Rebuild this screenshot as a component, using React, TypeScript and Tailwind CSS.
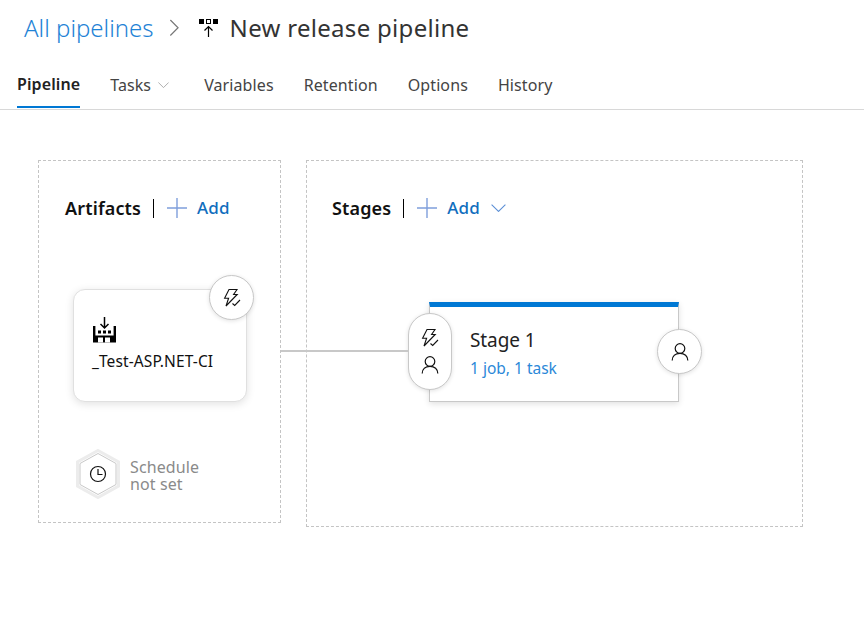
import React from "react";

const BoltCheck = () => (
	<svg width="20" height="20" viewBox="0 0 20 20" fill="none" stroke="#111" strokeWidth="1.1">
		<path d="M7 1.500h8l-3.400 5h3.600L4 18l2.600-7.800H2.600z" />
		<path d="M10.500 15.500l2.200 2 5.300-5.500" />
	</svg>
);

const Person = () => (
	<svg width="18" height="20" viewBox="0 0 18 20" fill="none" stroke="#111" strokeWidth="1.2">
		<circle cx="9" cy="6.5" r="4.8" />
		<path d="M1.2 18.5c0-4.5 3.2-7.2 7.8-7.2s7.8 2.700 7.800 7.200" />
	</svg>
);

const Plus = () => (
	<svg width="20" height="20" viewBox="0 0 20 20" stroke="#7f9fdc" strokeWidth="1.4">
		<path d="M10 0v20M0 10h20" />
	</svg>
);

const Chevron = ({ color, size }: { color: string; size: number }) => (
	<svg width={size} height={size / 2 + 1} viewBox="0 0 14 8" fill="none" stroke={color} strokeWidth="1">
		<path d="M.5.5L7 7l6.500-6.500" />
	</svg>
);

const PipelineIcon = () => (
	<svg width="20" height="20" viewBox="0 0 20 20">
		<rect x="0" y="1" width="5" height="5" fill="#000" />
		<rect x="7.500" y="1.500" width="4" height="4" fill="#fff" stroke="#000" />
		<rect x="14" y="1" width="5" height="5" fill="#000" />
		<path d="M9.500 19V9M5.500 12.500l4-4 4 4" fill="none" stroke="#000" strokeWidth="1.200" />
	</svg>
);

const ArtifactIcon = () => (
	<svg width="23" height="26" viewBox="0 0 23 26">
		<path d="M11.500 0v11M7.500 7l4 4 4-4" fill="none" stroke="#000" strokeWidth="1.500" />
		<path d="M1.200 9v10M21.800 9v10" stroke="#000" strokeWidth="2.400" />
		<rect x="5" y="13.500" width="3" height="3" fill="#000" />
		<rect x="10" y="13.500" width="3" height="3" fill="#000" />
		<rect x="15" y="13.500" width="3" height="3" fill="#000" />
		<rect x="0" y="18.500" width="23" height="7" fill="#000" />
		<rect x="5" y="20.500" width="5" height="5" fill="#fff" />
		<rect x="12" y="20.500" width="5" height="5" fill="#fff" />
	</svg>
);

const ScheduleIcon = () => (
	<svg width="44" height="50" viewBox="0 0 44 50" fill="none">
		<path d="M22 1.500L42.500 13v24L22 48.500 1.500 37V13z" stroke="#ececec" strokeWidth="3" fill="#fff" />
		<path d="M22 4.500L40 14.500v21L22 45.500 4 35.500v-21z" stroke="#c8c8c8" strokeWidth="1" fill="#fff" />
		<circle cx="22" cy="25" r="7.500" stroke="#111" strokeWidth="1.200" />
		<path d="M22 20v5.500h4.500" stroke="#111" strokeWidth="1.200" />
	</svg>
);

const Badge = ({ className, children }: { className: string; children: React.ReactNode }) => (
	<div className={`absolute flex items-center justify-center bg-white border border-[#c8c8c8] shadow-[0_1px_4px_rgba(0,0,0,0.12)] ${className}`}>
		{children}
	</div>
);

const PanelHeader = ({ title, chevron }: { title: string; chevron?: boolean }) => (
	<div className="flex items-center h-[20px]">
		<span className="text-[18px] font-semibold text-[#111] leading-[20px] tracking-[0.15px]">{title}</span>
		<div className="w-px h-[19px] bg-black ml-[12px] mr-[13px]" />
		<Plus />
		<span className="ml-[10px] text-[17px] font-medium text-[#106ebe] leading-[20px] tracking-[0.1px]">Add</span>
		{chevron && (
			<div className="ml-[11px]">
				<Chevron color="#5b8fd6" size={15} />
			</div>
		)}
	</div>
);

const tabs = ["Variables", "Retention", "Options", "History"];

export default function App() {
	return (
		<div className="relative min-h-[621px] bg-white font-['Noto_Sans',sans-serif] overflow-hidden">
			<header className="h-[110px] border-b border-[#d8d8d8]">
				<div className="flex items-center h-[58px] pl-[24px] pb-[3px]">
					<span className="text-[24px] font-light text-[#1f83d6]">All pipelines</span>
					<div className="ml-[12px] mr-[16px] -rotate-90">
						<Chevron color="#777" size={17} />
					</div>
					<PipelineIcon />
					<span className="ml-[11px] text-[24px] text-[#333] tracking-[0.3px]">New release pipeline</span>
				</div>
				<nav className="flex h-[51px] pl-[17px] text-[16px] text-[#444] tracking-[0.1px]">
					<div className="flex items-center h-[50px] pt-[4px] border-b-2 border-[#0078d4] font-semibold text-[#222]">Pipeline</div>
					<div className="flex items-center ml-[30px] h-[50px] pt-[4px]">
						Tasks
						<div className="ml-[7px]">
							<Chevron color="#999" size={11} />
						</div>
					</div>
					<div className="flex gap-[30px] ml-[35px]">
						{tabs.map((t) => (
							<div key={t} className="flex items-center h-[50px] pt-[4px]">{t}</div>
						))}
					</div>
				</nav>
			</header>

			<main className="flex items-start gap-[25px] pl-[38px] pt-[50px]">
				<section className="w-[243px] h-[363px] border border-dashed border-[#c4c4c4] pl-[26px] pt-[37px]">
					<PanelHeader title="Artifacts" />
					<div className="relative w-[174px] h-[113px] mt-[71px] ml-[8px] bg-white rounded-[12px] border border-[#e0e0e0] shadow-[0_2px_8px_rgba(0,0,0,0.12)] pl-[19px] pt-[27px]">
						<ArtifactIcon />
						<div className="mt-[8px] -ml-[1px] text-[15.500px] leading-[20px] text-[#111] tracking-[0.1px] whitespace-nowrap">_Test-ASP.NET-CI</div>
						<Badge className="w-[45px] h-[45px] rounded-full -top-[15px] -right-[8px]">
							<BoltCheck />
						</Badge>
					</div>
					<div className="flex items-center mt-[47px] ml-[11px]">
						<ScheduleIcon />
						<div className="ml-[10px] pt-[3px] text-[16px] leading-[17px] text-[#8a8a8a] tracking-[0.1px]">
							Schedule
							<br />
							not set
						</div>
					</div>
				</section>

				<section className="w-[497px] h-[367px] border border-dashed border-[#c4c4c4] pl-[25px] pt-[37px]">
					<PanelHeader title="Stages" chevron />
					<div className="relative w-[250px] h-[100px] mt-[84px] ml-[97px] bg-white border-t-[5px] border-t-[#0078d4] border-x border-b border-x-[#c8c8c8] border-b-[#c8c8c8] shadow-[0_2px_6px_rgba(0,0,0,0.12)] pl-[40px] pt-[20px]">
						<div className="text-[19px] leading-[26px] text-[#222] tracking-[-0.1px]">Stage 1</div>
						<div className="mt-[5px] text-[15.500px] leading-[20px] text-[#2b88d8]">1 job, 1 task</div>
						<Badge className="flex-col gap-[7px] w-[44px] h-[77px] rounded-full top-[6px] -left-[22px] pr-[1px]">
							<BoltCheck />
							<Person />
						</Badge>
						<Badge className="w-[45px] h-[45px] rounded-full top-[22px] -right-[24px]">
							<Person />
						</Badge>
					</div>
				</section>
			</main>

			{/* connector between artifact and stage */}
			<div className="absolute left-[281px] top-[350px] w-[127px] h-[2px] bg-[#c8c8c8]" />
		</div>
	);
}
